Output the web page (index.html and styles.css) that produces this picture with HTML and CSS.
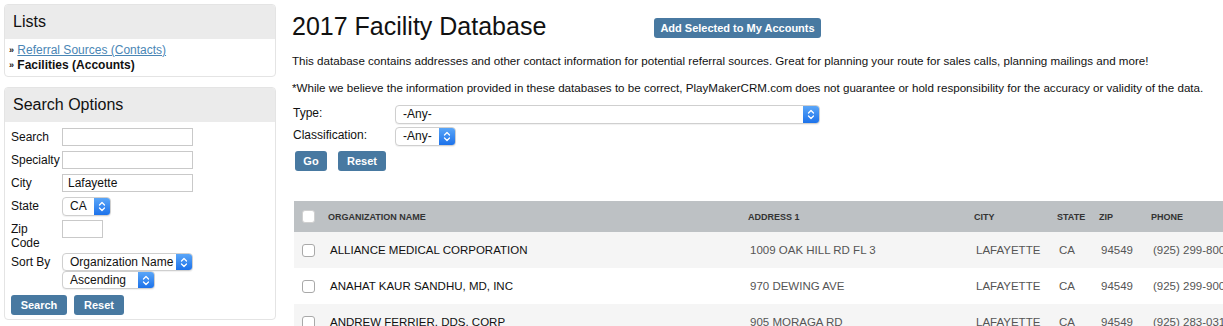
FILE: index.html
```html
<!DOCTYPE html>
<html>
<head>
<meta charset="utf-8">
<title>2017 Facility Database</title>
<link rel="stylesheet" href="styles.css">
</head>
<body>
<div class="page">
  <aside class="sidebar">
    <section class="panel">
      <h2 class="panel-head">Lists</h2>
      <div class="panel-body lists">
        <div class="list-item"><span class="raquo">»</span> <a href="#" class="link">Referral Sources (Contacts)</a></div>
        <div class="list-item current"><span class="raquo">»</span> Facilities (Accounts)</div>
      </div>
    </section>
    <section class="panel">
      <h2 class="panel-head">Search Options</h2>
      <div class="panel-body search">
        <div class="form-grid">
          <label class="lbl">Search</label>
          <div class="ctl"><span class="input w131"></span></div>
          <label class="lbl">Specialty</label>
          <div class="ctl"><span class="input w131"></span></div>
          <label class="lbl">City</label>
          <div class="ctl"><span class="input w131">Lafayette</span></div>
          <label class="lbl">State</label>
          <div class="ctl"><span class="select w49"><span class="sel-text">CA</span><span class="sel-arrow"><svg width="8" height="11" viewBox="0 0 8 11"><path d="M1.5 4 L4 1.5 L6.5 4 M1.5 7 L4 9.5 L6.5 7" fill="none" stroke="#fff" stroke-width="1.3" stroke-linecap="round" stroke-linejoin="round"/></svg></span></span></div>
          <label class="lbl zip">Zip<br>Code</label>
          <div class="ctl"><span class="input w41"></span></div>
          <label class="lbl">Sort By</label>
          <div class="stack">
            <span class="select w131"><span class="sel-text">Organization Name</span><span class="sel-arrow"><svg width="8" height="11" viewBox="0 0 8 11"><path d="M1.5 4 L4 1.5 L6.5 4 M1.5 7 L4 9.5 L6.5 7" fill="none" stroke="#fff" stroke-width="1.3" stroke-linecap="round" stroke-linejoin="round"/></svg></span></span>
            <span class="select w93"><span class="sel-text">Ascending</span><span class="sel-arrow"><svg width="8" height="11" viewBox="0 0 8 11"><path d="M1.5 4 L4 1.5 L6.5 4 M1.5 7 L4 9.5 L6.5 7" fill="none" stroke="#fff" stroke-width="1.3" stroke-linecap="round" stroke-linejoin="round"/></svg></span></span>
          </div>
        </div>
        <div class="btn-row">
          <button class="btn btn-search">Search</button>
          <button class="btn btn-reset">Reset</button>
        </div>
      </div>
    </section>
  </aside>

  <main class="main">
    <div class="title-row">
      <h1 class="title">2017 Facility Database</h1>
      <button class="btn btn-add">Add Selected to My Accounts</button>
    </div>
    <p class="intro">This database contains addresses and other contact information for potential referral sources. Great for planning your route for sales calls, planning mailings and more!</p>
    <p class="intro disclaimer">*While we believe the information provided in these databases to be correct, PlayMakerCRM.com does not guarantee or hold responsibility for the accuracy or validity of the data.</p>

    <div class="filters">
      <label class="flbl">Type:</label>
      <div><span class="select w425"><span class="sel-text">-Any-</span><span class="sel-arrow"><svg width="8" height="11" viewBox="0 0 8 11"><path d="M1.5 4 L4 1.5 L6.5 4 M1.5 7 L4 9.5 L6.5 7" fill="none" stroke="#fff" stroke-width="1.3" stroke-linecap="round" stroke-linejoin="round"/></svg></span></span></div>
      <label class="flbl">Classification:</label>
      <div><span class="select w61"><span class="sel-text">-Any-</span><span class="sel-arrow"><svg width="8" height="11" viewBox="0 0 8 11"><path d="M1.5 4 L4 1.5 L6.5 4 M1.5 7 L4 9.5 L6.5 7" fill="none" stroke="#fff" stroke-width="1.3" stroke-linecap="round" stroke-linejoin="round"/></svg></span></span></div>
    </div>
    <div class="btn-row filter-btns">
      <button class="btn btn-go">Go</button>
      <button class="btn btn-reset2">Reset</button>
    </div>

    <table class="results">
      <colgroup>
        <col class="c-check"><col class="c-org"><col class="c-addr"><col class="c-city"><col class="c-state"><col class="c-zip"><col class="c-phone">
      </colgroup>
      <thead>
        <tr>
          <th><span class="cb cb-head"></span></th>
          <th>ORGANIZATION NAME</th>
          <th>ADDRESS 1</th>
          <th>CITY</th>
          <th>STATE</th>
          <th>ZIP</th>
          <th>PHONE</th>
        </tr>
      </thead>
      <tbody>
        <tr>
          <td><span class="cb"></span></td>
          <td class="org">ALLIANCE MEDICAL CORPORATION</td>
          <td>1009 OAK HILL RD FL 3</td>
          <td>LAFAYETTE</td>
          <td>CA</td>
          <td>94549</td>
          <td>(925) 299-8000</td>
        </tr>
        <tr>
          <td><span class="cb"></span></td>
          <td class="org">ANAHAT KAUR SANDHU, MD, INC</td>
          <td>970 DEWING AVE</td>
          <td>LAFAYETTE</td>
          <td>CA</td>
          <td>94549</td>
          <td>(925) 299-9000</td>
        </tr>
        <tr>
          <td><span class="cb"></span></td>
          <td class="org">ANDREW FERRIER, DDS, CORP</td>
          <td>905 MORAGA RD</td>
          <td>LAFAYETTE</td>
          <td>CA</td>
          <td>94549</td>
          <td>(925) 283-0311</td>
        </tr>
      </tbody>
    </table>
  </main>
</div>
</body>
</html>
```
FILE: styles.css
```css
html, body {
  margin: 0;
  padding: 0;
  background: #fff;
  overflow: hidden;
}
body {
  font-family: "Liberation Sans", Arial, Helvetica, sans-serif;
  font-size: 12px;
  color: #111;
}
.page {
  display: flex;
  align-items: flex-start;
  width: 1400px;
}

/* Sidebar */
.sidebar {
  width: 272px;
  margin: 4px 0 0 4px;
  display: flex;
  flex-direction: column;
  gap: 10px;
  flex: none;
}
.panel {
  border: 1px solid #e4e4e4;
  border-radius: 4px;
  background: #fff;
  overflow: hidden;
}
.panel-head {
  margin: 0;
  height: 34px;
  line-height: 34px;
  background: #ebebeb;
  font-size: 16px;
  font-weight: normal;
  padding-left: 8px;
  color: #111;
}
.panel-body.lists {
  padding: 4px 8px 3px 4px;
}
.list-item {
  font-size: 12px;
  height: 15px;
  line-height: 15px;
  white-space: nowrap;
}
.raquo {
  font-size: 9px;
  font-weight: bold;
  vertical-align: 1px;
  line-height: 0;
}
.link {
  color: #4a86b5;
  text-decoration: underline;
}
.list-item.current {
  font-weight: bold;
}
.panel-body.search {
  padding: 6px 8px 4px 6px;
}
.form-grid {
  display: grid;
  grid-template-columns: 51px auto;
  row-gap: 5px;
  align-items: start;
}
.lbl {
  font-size: 12px;
  line-height: 16px;
  height: 18px;
  padding-top: 1px;
  box-sizing: border-box;
}
.lbl.zip {
  line-height: 14px;
  height: 28px;
  padding-top: 2px;
}
.ctl {
  height: 18px;
}
.input {
  display: block;
  box-sizing: border-box;
  height: 18px;
  border: 1px solid #c9c9c9;
  background: #fff;
  font-size: 12px;
  line-height: 16px;
  padding-left: 5px;
  color: #111;
}
.w131 { width: 131px; }
.w41 { width: 41px; }
.w49 { width: 49px; }
.w93 { width: 93px; }
.w61 { width: 61px; }
.w425 { width: 425px; }
.stack {
  display: flex;
  flex-direction: column;
}
.stack .select {
  height: 18px;
}
.select {
  display: flex;
  box-sizing: border-box;
  height: 19px;
  border: 1px solid #cfcfcf;
  border-radius: 4px;
  background: #fff;
  overflow: hidden;
  box-shadow: 0 1px 1px rgba(0,0,0,0.06);
}
.sel-text {
  flex: 1;
  font-size: 12px;
  line-height: 17px;
  padding-left: 7px;
  color: #111;
  white-space: nowrap;
  overflow: hidden;
}
.stack .sel-text {
  line-height: 16px;
}
.sel-arrow {
  flex: none;
  width: 16px;
  background: linear-gradient(#5aa6f8, #1d72ea);
  display: flex;
  align-items: center;
  justify-content: center;
}
.btn {
  font-family: "Liberation Sans", Arial, Helvetica, sans-serif;
  font-weight: bold;
  font-size: 11px;
  color: #fff;
  background: #4879a1;
  border: none;
  border-radius: 3px;
  padding: 0;
  height: 20px;
  cursor: pointer;
}
.btn-row {
  display: flex;
  gap: 7px;
  margin-top: 6px;
}
.btn-search { width: 56px; }
.btn-reset { width: 50px; }

/* Main */
.main {
  margin-left: 16px;
  flex: none;
  width: 1100px;
}
.title-row {
  display: flex;
  align-items: center;
  height: 32px;
  margin-top: 10px;
}
.title {
  margin: 0;
  font-size: 25px;
  font-weight: normal;
  color: #111;
  width: 362px;
  flex: none;
}
.btn-add {
  width: 167px;
  margin-top: 3px;
}
.intro {
  margin: 0;
  font-size: 11.6px;
  line-height: 15px;
  color: #111;
  margin-top: 11px;
  white-space: nowrap;
}
.intro.disclaimer {
  margin-top: 12px;
}
.filters {
  display: grid;
  grid-template-columns: 102px auto;
  row-gap: 3px;
  margin-top: 10px;
  margin-left: 1px;
  align-items: center;
}
.flbl {
  font-size: 12px;
  line-height: 16px;
  margin-top: -3px;
}
.filter-btns {
  margin-top: 5px;
  margin-left: 3px;
  gap: 11px;
}
.btn-go { width: 32px; }
.btn-reset2 { width: 48px; }

/* Table */
.results {
  margin-top: 30px;
  margin-left: 2px;
  border-collapse: collapse;
  table-layout: fixed;
  width: 971px;
}
.c-check { width: 28px; }
.c-org { width: 420px; }
.c-addr { width: 226px; }
.c-city { width: 83px; }
.c-state { width: 42px; }
.c-zip { width: 52px; }
.c-phone { width: 120px; }
.results th {
  background: #bdc1c4;
  height: 31px;
  text-align: left;
  font-size: 9px;
  font-weight: bold;
  color: #333;
  padding: 0 0 0 6px;
  white-space: nowrap;
}
.results td {
  height: 36px;
  padding: 0 0 0 8px;
  font-size: 11.5px;
  color: #555;
  white-space: nowrap;
  overflow: hidden;
}
.results td.org {
  color: #111;
}
.results tbody tr:nth-child(odd) td {
  background: #f5f5f5;
}
.results th:first-child,
.results td:first-child {
  padding-left: 8px;
}
.cb {
  display: inline-block;
  width: 11px;
  height: 11px;
  border: 1px solid #a9a9a9;
  border-radius: 3px;
  background: #fff;
  vertical-align: middle;
}
.cb-head {
  border-color: #d0d0d0;
}
```
